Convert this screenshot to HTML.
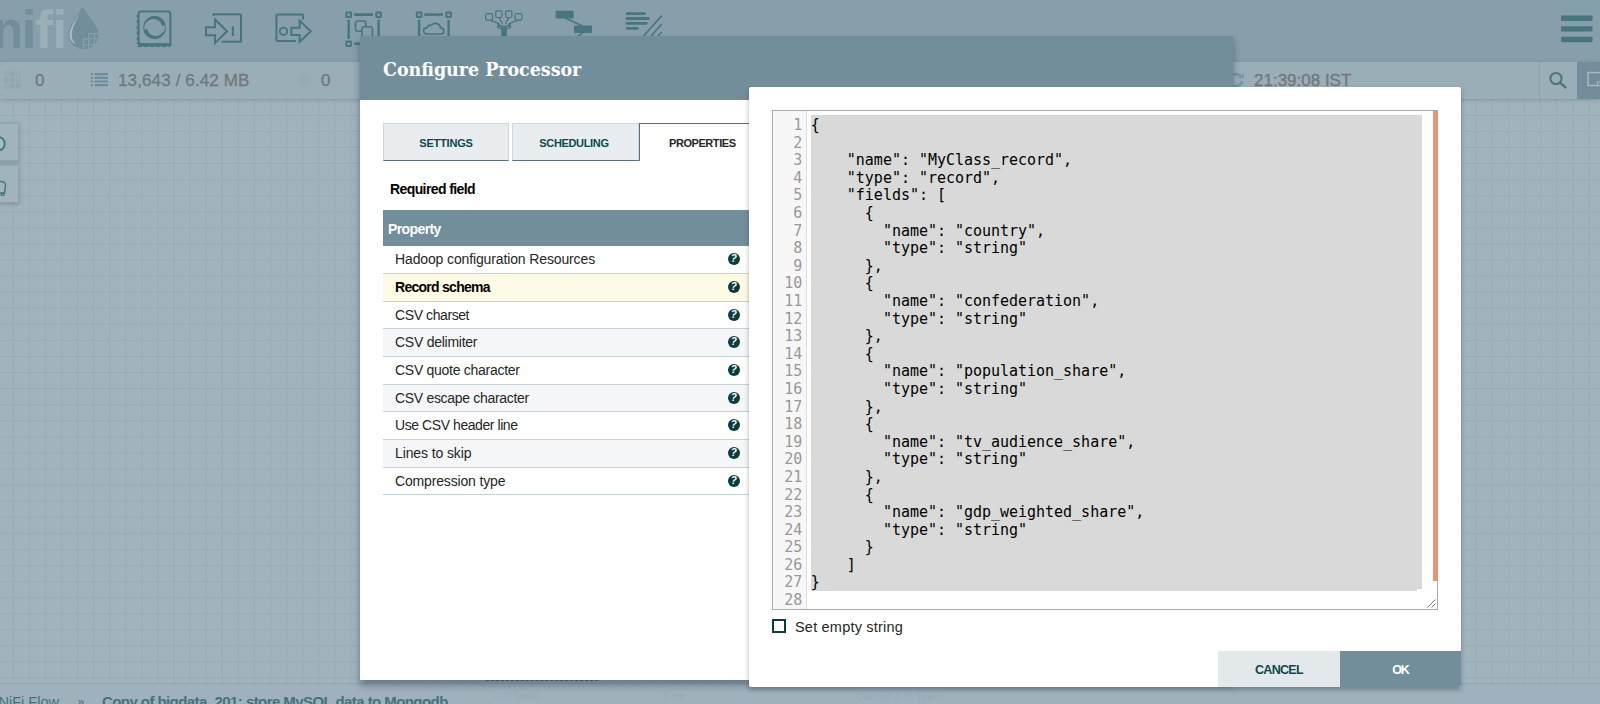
<!DOCTYPE html>
<html lang="en">
<head>
<meta charset="utf-8">
<title>NiFi - Configure Processor</title>
<style>
html,body{margin:0;padding:0;}
body{width:1600px;height:704px;overflow:hidden;position:relative;
  font-family:"Liberation Sans",sans-serif;color:#262626;
  background-color:#a1b3bd;
  background-image:
    linear-gradient(to right,#98acb6 1px,transparent 1px),
    linear-gradient(to bottom,#98acb6 1px,transparent 1px);
  background-size:16.08px 16.08px;background-position:12.7px 2.3px;}
.abs{position:absolute;}
#header{left:0;top:0;width:1600px;height:62px;background:#879eab;}
#status{left:0;top:62px;width:1600px;height:37px;background:#9aaeb8;box-shadow:0 1px 4px rgba(60,85,100,.28);}
.st{position:absolute;top:62px;height:37px;line-height:38px;font-size:17px;color:#74767d;-webkit-text-stroke:.3px #74767d;white-space:nowrap;}
#crumbs{left:0;top:683px;width:1600px;height:21px;background:#9fb1bc;border-top:1px solid #94a8b3;box-sizing:border-box;}
.crumb{position:absolute;top:692.5px;font-size:15px;line-height:18px;color:#44727a;white-space:nowrap;}
.sidepanel{position:absolute;left:-2px;width:19.2px;background:#a1b3bd;border:1px solid #8fa5b0;box-shadow:0 1px 4px rgba(60,85,100,.4);overflow:hidden;}
.ghost{position:absolute;top:687.5px;font-size:9.6px;line-height:15px;color:#96abb6;white-space:nowrap;}
/* configure dialog */
#dlg{left:360px;top:36px;width:873px;height:644px;background:#fff;box-shadow:0 5px 7px rgba(20,40,50,.42);}
#dlghead{left:0;top:0;width:873px;height:64px;background:#728e9b;}
#dlgtitle{left:23px;top:20.5px;font-family:"DejaVu Serif Condensed","DejaVu Serif","Liberation Serif",serif;font-stretch:condensed;font-weight:bold;font-size:19.4px;line-height:26px;color:#fff;letter-spacing:0;white-space:nowrap;}
.tab{position:absolute;top:87px;height:38px;box-sizing:border-box;background:#e9edef;border:1px solid #cdd8dc;border-bottom:1px solid #5b6f78;
  font-weight:bold;font-size:11px;line-height:38px;text-align:center;color:#0d4a4c;white-space:nowrap;}
.tab.sel{background:#fff;border:1px solid #5b6f78;border-bottom:none;border-right:none;color:#262626;}
#req{left:30px;top:144px;font-weight:bold;font-size:14px;line-height:18px;color:#000;letter-spacing:-.6px;white-space:nowrap;}
#thead{left:23px;top:174px;width:420px;height:36px;background:#728e9b;color:#fff;font-weight:bold;font-size:14px;line-height:38px;letter-spacing:-.6px;text-indent:5px;}
.row{position:absolute;left:23px;width:420px;box-sizing:border-box;border-bottom:1px solid #c7d2d7;font-size:14px;letter-spacing:-.1px;color:#262626;white-space:nowrap;}
.row span{position:absolute;left:12px;top:0;line-height:27px;}
.row.alt{background:#f4f6f7;}
.row.act{background:#fffae6;font-weight:bold;letter-spacing:-.5px;color:#000;}
.q{position:absolute;left:344.7px;top:7.3px;width:12px;height:12px;border-radius:50%;background:#0b3c3e;color:#fff;font-weight:bold;font-size:10px;line-height:12.5px;text-align:center;letter-spacing:0;}
/* editor dialog */
#ed{left:749px;top:87px;width:712px;height:600px;background:#fff;border-radius:2px;box-shadow:0 3px 5px rgba(20,40,50,.33);}
#cm{left:23px;top:23px;width:666px;height:500px;box-sizing:border-box;border:1px solid #aaa;background:#fff;overflow:hidden;}
#gutter{left:0;top:0;width:34.4px;height:498px;background:#f7f7f7;border-right:1px solid #ddd;box-sizing:border-box;}
#sel{left:38px;top:4.3px;width:611px;height:475.4px;background:#d9d9d9;}
#sel2{left:644px;top:477.6px;width:6px;height:2.4px;background:#fff;}
pre{margin:0;font-family:"DejaVu Sans Mono","Liberation Mono",monospace;font-size:15px;line-height:17.6px;}
#nums{position:absolute;left:0;top:6.05px;width:29.3px;text-align:right;color:#999;}
#code{position:absolute;left:37.8px;top:6.05px;letter-spacing:-.02px;color:#000;}
#vbar{left:659.5px;top:0;width:5px;height:470px;background:#f39066;}
#btnc{left:469px;top:564px;width:122px;height:36px;background:#e3e8eb;color:#0d4a4c;font-weight:bold;font-size:12.5px;letter-spacing:-.7px;line-height:38px;text-align:center;}
#btno{left:591px;top:564px;width:121px;height:36px;background:#728e9b;color:#fff;font-weight:bold;font-size:12.5px;letter-spacing:-1px;line-height:38px;text-align:center;border-bottom-right-radius:2px;}
#chk{left:23px;top:532px;width:14px;height:14px;box-sizing:border-box;border:2px solid #0b3c3e;background:#fff;}
#chkl{left:46px;top:530.7px;font-size:14.5px;line-height:18px;letter-spacing:.2px;color:#262626;white-space:nowrap;}
</style>
</head>
<body>
<div id="header" class="abs"></div>
<div id="status" class="abs"></div>
<div class="st" style="left:35px">0</div>
<div class="st" style="left:118px;letter-spacing:.13px">13,643 / 6.42 MB</div>
<div class="st" style="left:321px">0</div>
<div class="st" style="left:1254px">21:39:08 IST</div>


<svg id="hdrsvg" class="abs" style="left:0;top:0" width="1600" height="110" viewBox="0 0 1600 110">
  <!-- logo -->
  <g font-family="Liberation Sans, sans-serif" font-weight="bold" font-size="54">
    <text transform="translate(22.9,47.6) scale(.9,1)" x="0" y="0" text-anchor="end" fill="#728e9b">n</text>
    <text x="21.4" y="47.6" fill="#728e9b">i</text>
    <text x="35" y="47.6" fill="#9bafb9">f</text>
    <text x="52.2" y="47.6" fill="#9bafb9">i</text>
  </g>
  <path d="M82.8,7 C80,12 68.3,27 68.3,34.2 A15,14.6 0 0 0 98.6,34.2 C98.6,27 85.5,12 82.8,7 Z" fill="#728e9b"/>
  <path d="M80,13 C75,20 69.3,29 69.5,35 C69.7,39.8 72.4,42.8 75.9,44.5 C73.6,42 71.9,39.4 71.7,35 C71.5,29.5 76,20.5 80,13 Z" fill="#a9bdc7"/>
  <g stroke="#879eab" stroke-width="1.2" fill="none">
    <path d="M88.6,33.6 V50 M94.4,33.6 V50 M83.4,38.9 V50 M88.6,33.6 H100 M83.4,38.9 H100 M83.4,44.6 H100"/>
  </g>
  <g fill="none" stroke="#47767f" stroke-linecap="butt" stroke-linejoin="round">
    <!-- processor -->
    <rect x="138.6" y="11.6" width="31.8" height="32.8" rx="2.5" stroke-width="2"/>
    <path d="M138,44.8 H171.4" stroke-width="3"/>
    <path d="M137.3,14.5 V44" stroke-width="1.2" stroke-dasharray="3.2 2.4"/>
    <path d="M137.6,46.6 H170" stroke-width="1" stroke-dasharray="4.2 2"/>
    <circle cx="154.6" cy="27.5" r="10.9" stroke-width="1"/>
    <path d="M143.59,24.55 L143.89,23.59 L144.27,22.67 L144.74,21.78 L145.28,20.94 L145.89,20.15 L146.57,19.41 L147.31,18.74 L148.11,18.13 L148.96,17.60 L149.85,17.14 L150.77,16.76 L151.73,16.47 L152.71,16.26 L153.71,16.14 L154.71,16.10 L155.71,16.15 L156.70,16.29 L157.67,16.52 L158.63,16.83 L159.55,17.23 L160.43,17.70 L161.27,18.25 L162.05,18.87 L162.78,19.56 L163.45,20.31 L164.04,21.11 L164.57,21.97 L165.01,22.86 A1.95,1.95 0 0 1 161.45,24.45 L161.21,23.83 L160.92,23.23 L160.57,22.65 L160.16,22.10 L159.71,21.58 L159.21,21.10 L158.67,20.66 L158.08,20.27 L157.46,19.93 L156.80,19.63 L156.12,19.40 L155.41,19.22 L154.68,19.10 L153.93,19.04 L153.18,19.05 L152.42,19.12 L151.67,19.26 L150.91,19.46 L150.17,19.73 L149.45,20.07 L148.75,20.46 L148.07,20.92 L147.42,21.44 L146.80,22.01 L146.22,22.64 L145.66,23.32 L145.11,24.04 L144.36,24.76 Z" fill="#47767f" stroke="none"/>
    <path d="M165.61,30.45 L165.31,31.41 L164.93,32.33 L164.46,33.22 L163.92,34.06 L163.31,34.85 L162.63,35.59 L161.89,36.26 L161.09,36.87 L160.24,37.40 L159.35,37.86 L158.43,38.24 L157.47,38.53 L156.49,38.74 L155.49,38.86 L154.49,38.90 L153.49,38.85 L152.50,38.71 L151.53,38.48 L150.57,38.17 L149.65,37.77 L148.77,37.30 L147.93,36.75 L147.15,36.13 L146.42,35.44 L145.75,34.69 L145.16,33.89 L144.63,33.03 L144.19,32.14 A1.95,1.95 0 0 1 147.75,30.55 L147.99,31.17 L148.28,31.77 L148.63,32.35 L149.04,32.90 L149.49,33.42 L149.99,33.90 L150.53,34.34 L151.12,34.73 L151.74,35.07 L152.40,35.37 L153.08,35.60 L153.79,35.78 L154.52,35.90 L155.27,35.96 L156.02,35.95 L156.78,35.88 L157.53,35.74 L158.29,35.54 L159.03,35.27 L159.75,34.93 L160.45,34.54 L161.13,34.08 L161.78,33.56 L162.40,32.99 L162.98,32.36 L163.54,31.68 L164.09,30.96 L164.84,30.24 Z" fill="#47767f" stroke="none"/>
    <!-- input port -->
    <path d="M213.5,16 V14.2 H240 Q241,14.2 241,15.2 V41.8 H221.5" stroke-width="2"/>
    <path d="M206,27.3 H215 V19.5 L227,31.3 L215,43.2 V35.3 H206 Z" stroke-width="2" stroke-linejoin="miter"/>
    <path d="M232.9,26.4 V36.1" stroke-width="2"/>
    <!-- output port -->
    <path d="M303,19.5 V15.6 Q303,14.6 302,14.6 H277.4 Q276.4,14.6 276.4,15.6 V40 Q276.4,41 277.4,41 H296" stroke-width="2"/>
    <circle cx="283.5" cy="31.3" r="3.7" stroke-width="1.8"/>
    <path d="M291.4,27.7 H299.6 V20.6 L310.8,31.3 L299.6,42 V34.9 H291.4 Z" stroke-width="2" stroke-linejoin="miter"/>
    <!-- process group -->
    <g stroke-width="2" stroke-linejoin="miter">
      <rect x="346.4" y="12.4" width="4.6" height="4.6" rx=".3"/>
      <rect x="376.3" y="12.4" width="4.6" height="4.6" rx=".3"/>
      <rect x="346.4" y="41.4" width="4.6" height="4.6" rx=".3"/>
    </g>
    <path d="M354.2,14.6 H373 M354.2,43.7 H373" stroke-width="2.6"/>
    <path d="M348.7,19.8 V39 M378.6,19.8 V39" stroke-width="2.4"/>
    <rect x="355.5" y="21" width="10.4" height="10.2" rx="2.2" stroke-width="1.6"/>
    <rect x="362" y="26.8" width="10.4" height="12" rx="2.2" stroke-width="1.6" fill="#879eab"/>
    <!-- remote process group -->
    <g stroke-width="2" stroke-linejoin="miter">
      <rect x="416.8" y="12.4" width="4.6" height="4.6" rx=".3"/>
      <rect x="446.3" y="12.4" width="4.6" height="4.6" rx=".3"/>
    </g>
    <path d="M424.4,14.6 H443" stroke-width="2.6"/>
    <path d="M419.1,19.8 V38.3 M448.6,19.8 V38.3" stroke-width="2.4"/>
    <path d="M427.5,34 Q423.6,34 423.6,30.8 Q423.6,27.8 427.3,27.6 Q427.8,24.6 430.6,25.6 Q432.6,22.8 436.4,23.4 Q440,24.2 440.6,27.8 Q444,28 444,31 Q444,34 440.6,34 Z" stroke-width="1.7"/>
    <!-- funnel -->
    <g stroke-width="1.2">
      <rect x="485.6" y="13.6" width="7" height="6.6" rx="1.4"/>
      <rect x="495.7" y="10.9" width="6.3" height="6.6" rx="1.4"/>
      <rect x="505.6" y="10.9" width="6.3" height="6.6" rx="1.4"/>
      <rect x="515" y="13.6" width="7" height="6.6" rx="1.4"/>
      <path d="M489.5,20.2 Q496,22 500,24.5 M499,17.5 L502.5,24 M508.8,17.5 L505.5,24 M518.5,20.2 Q512,22 508,24.5"/>
    </g>
    <path d="M497.2,25 Q504,28.6 511,25" stroke-width="2"/>
    <path d="M496.6,27 Q504,31.5 511.6,27" stroke-width="1.3"/>
    <path d="M504.1,28 V37" stroke-width="5.6"/>
    <!-- template -->
    <rect x="555.6" y="10.8" width="18.1" height="7.6" rx=".8" fill="#47767f" stroke="none"/>
    <rect x="574" y="25.6" width="18" height="7.5" rx=".8" fill="#47767f" stroke="none"/>
    <path d="M565,18 L582.5,26 M583,32.8 L577,37" stroke-width="1.4"/>
    <!-- label -->
    <g stroke-width="2.8" stroke-linecap="round">
      <path d="M627,13.6 H644.6 M627,18.5 H648.4 M627,23.4 H646.4 M627,28.3 H637.4"/>
    </g>
    <path d="M661.8,15.6 L643.6,36 M661.8,24 L651,36 M661.8,32 L658,36" stroke-width="1.6"/>
  </g>
  <!-- hamburger -->
  <g fill="#47767f">
    <rect x="1561" y="15.6" width="31.5" height="5.4" rx="1"/>
    <rect x="1561" y="26.2" width="31.5" height="5.4" rx="1"/>
    <rect x="1561" y="36.8" width="31.5" height="5.4" rx="1"/>
  </g>
  <!-- status bar icons -->
  <g fill="none" stroke="#8ea6b2" stroke-width="1">
    <circle cx="6.5" cy="73.8" r="2.2"/><circle cx="12.5" cy="73.8" r="2.2" fill="#8ea6b2"/><circle cx="18.5" cy="73.8" r="2.2"/>
    <circle cx="6.5" cy="80" r="2.2" fill="#8ea6b2"/><circle cx="12.5" cy="80" r="2.2" fill="#8ea6b2"/><circle cx="18.5" cy="80" r="2.2"/>
    <circle cx="6.5" cy="86.2" r="2.2"/><circle cx="12.5" cy="86.2" r="2.2" fill="#8ea6b2"/><circle cx="18.5" cy="86.2" r="2.2" fill="#8ea6b2"/>
  </g>
  <g stroke="#6b8e9b" stroke-width="2.2" fill="none">
    <path d="M90.8,74.2 H92.8 M94.6,74.2 H108 M90.8,77.9 H92.8 M94.6,77.9 H108 M90.8,81.5 H92.8 M94.6,81.5 H108 M90.8,85.1 H92.8 M94.6,85.1 H108"/>
  </g>
  <g fill="none" stroke="#8fa9b5" stroke-width="1">
    <circle cx="304.2" cy="80" r="7"/><circle cx="304.2" cy="80" r="4.5"/><circle cx="304.2" cy="80" r="2" fill="#8fa9b5"/>
  </g>
  <!-- search -->
  <path d="M1539.5,62 V99" stroke="#8da2ad" stroke-width="1"/>
  <rect x="1577" y="62" width="23" height="37" fill="#728e9b"/>
  <rect x="1588" y="72.5" width="14" height="13" fill="none" stroke="#a9bcc6" stroke-width="1.4"/>
  <rect x="1597.5" y="82" width="4" height="3.5" fill="none" stroke="#a9bcc6" stroke-width="1"/>
  <circle cx="1556" cy="78.5" r="5.6" fill="none" stroke="#47767f" stroke-width="2"/>
  <path d="M1560,82.6 L1565.4,87.4" stroke="#47767f" stroke-width="2.4" stroke-linecap="round"/>
  <!-- refresh icon (partly hidden) -->
  <path d="M1232,75 Q1237.6,72.6 1241,77" fill="none" stroke="#7797a6" stroke-width="2.8"/>
  <path d="M1243.8,73 V78.2 H1238 Z" fill="#7797a6"/>
  <path d="M1242.4,81 Q1240.4,87 1232,86.4" fill="none" stroke="#7797a6" stroke-width="2.8"/>
</svg>
<div class="sidepanel" style="top:122.8px;height:36.6px"><svg class="abs" style="left:1px;top:0" width="19" height="36" viewBox="0 0 19 36"><circle cx="-2" cy="19.7" r="6.7" fill="#a6bfcc" stroke="#47767f" stroke-width="2"/></svg></div>
<div class="sidepanel" style="top:164.6px;height:36.6px"><svg class="abs" style="left:1px;top:0" width="19" height="36" viewBox="0 0 19 36"><path d="M-1,15.6 Q5,15.2 5.4,18.4 Q5.6,22 4.4,27.4 H0" fill="none" stroke="#47767f" stroke-width="1.4"/><rect x="1.3" y="26.8" width="2.6" height="2.6" fill="none" stroke="#47767f" stroke-width="1.2"/></svg></div>

<div id="crumbs" class="abs"></div>
<div class="crumb" style="left:-1.5px;font-size:14.5px">NiFi Flow</div>
<div class="crumb" style="left:77.5px;font-size:12px">»</div>
<div class="crumb" style="left:102px;font-weight:bold;letter-spacing:-.57px">Copy of bigdata_201: store MySQL data to Mongodb</div>

<div class="ghost" style="left:494.5px">0 (0 bytes)</div>
<div class="ghost" style="left:663.5px">5 min</div>
<div class="ghost" style="left:856.5px;top:689px;word-spacing:1.5px">Queued 0 (0 bytes)</div>
<div class="abs" style="left:486px;top:680px;width:112px;height:0;border-top:1.6px dashed #4a606d;opacity:.8"></div>
<div id="dlg" class="abs">
  <div id="dlghead" class="abs"></div>
  <div id="dlgtitle" class="abs">Configure Processor</div>
  <div class="tab" style="left:23px;width:126px;letter-spacing:-.2px">SETTINGS</div>
  <div class="tab" style="left:151.7px;width:127.6px;padding-right:3px;letter-spacing:-.34px">SCHEDULING</div>
  <div class="tab sel" style="left:279.3px;width:128px;padding-right:3px;letter-spacing:-.43px">PROPERTIES</div>
  <div class="abs" style="left:388px;top:238px;width:1px;height:27px;background:#66665c"></div>
  <div id="req" class="abs">Required field</div>
  <div id="thead" class="abs">Property</div>
  <div class="row" style="top:210px;height:28px"><span style="letter-spacing:-0.13px">Hadoop configuration Resources</span><i class="q">?</i></div>
  <div class="row act" style="top:238px;height:28px"><span style="letter-spacing:-0.73px">Record schema</span><i class="q">?</i></div>
  <div class="row" style="top:266px;height:27px"><span style="letter-spacing:-0.41px">CSV charset</span><i class="q">?</i></div>
  <div class="row alt" style="top:293px;height:28px"><span style="letter-spacing:-0.26px">CSV delimiter</span><i class="q">?</i></div>
  <div class="row" style="top:321px;height:28px"><span style="letter-spacing:-0.28px">CSV quote character</span><i class="q">?</i></div>
  <div class="row alt" style="top:349px;height:27px"><span style="letter-spacing:-0.31px">CSV escape character</span><i class="q">?</i></div>
  <div class="row" style="top:376px;height:28px"><span style="letter-spacing:-0.43px">Use CSV header line</span><i class="q">?</i></div>
  <div class="row alt" style="top:404px;height:28px"><span style="letter-spacing:-0.11px">Lines to skip</span><i class="q">?</i></div>
  <div class="row" style="top:432px;height:27px"><span style="letter-spacing:-0.16px">Compression type</span><i class="q">?</i></div>
</div>

<div id="ed" class="abs">
  <div id="cm" class="abs">
    <div id="gutter" class="abs"></div>
    <div id="sel" class="abs"></div>
    <div id="sel2" class="abs"></div>
<pre id="nums">1
2
3
4
5
6
7
8
9
10
11
12
13
14
15
16
17
18
19
20
21
22
23
24
25
26
27
28</pre>
<pre id="code">{

    "name": "MyClass_record",
    "type": "record",
    "fields": [
      {
        "name": "country",
        "type": "string"
      },
      {
        "name": "confederation",
        "type": "string"
      },
      {
        "name": "population_share",
        "type": "string"
      },
      {
        "name": "tv_audience_share",
        "type": "string"
      },
      {
        "name": "gdp_weighted_share",
        "type": "string"
      }
    ]
}
</pre>
    <div id="vbar" class="abs"></div>
    <svg class="abs" style="left:652px;top:486px" width="12" height="12" viewBox="0 0 12 12"><path d="M2.5,10.5 L10.5,2.5 M6.5,10.5 L10.5,6.5" stroke="#777" stroke-width="1" fill="none"/></svg>
  </div>
  <div id="chk" class="abs"></div>
  <div id="chkl" class="abs">Set empty string</div>
  <div id="btnc" class="abs">CANCEL</div>
  <div id="btno" class="abs">OK</div>
</div>
</body>
</html>
